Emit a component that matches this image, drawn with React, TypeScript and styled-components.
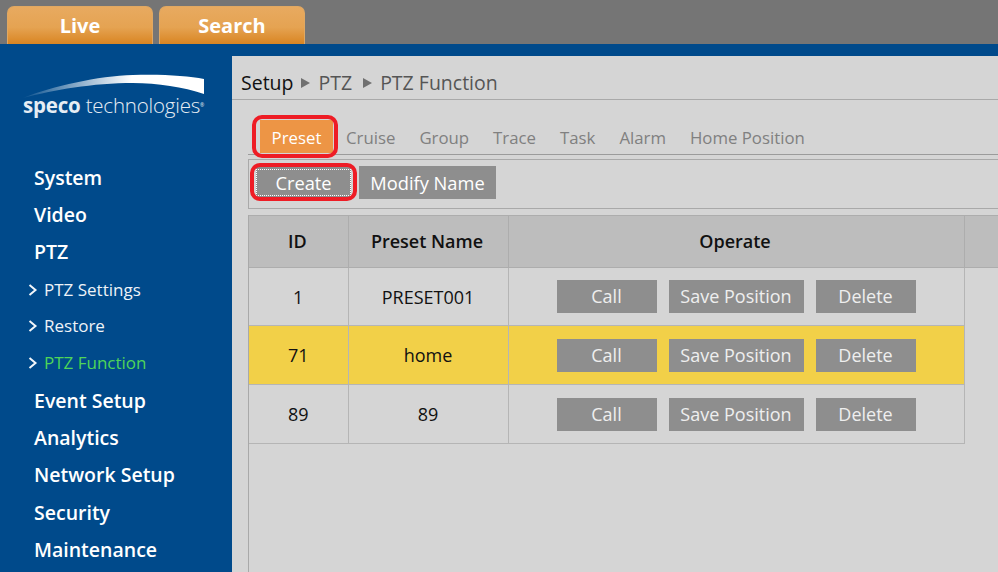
import React from 'react'
import styled, { createGlobalStyle } from 'styled-components'

const GlobalStyle = createGlobalStyle`
    html, body {
        margin: 0;
        padding: 0;
        width: 998px;
        height: 572px;
        overflow: hidden;
        background: #d5d5d5;
        font-family: 'Open Sans', 'Noto Sans', sans-serif;
    }
    * {
        box-sizing: border-box;
    }
`

const Page = styled.div`
    width: 998px;
    height: 572px;
    display: flex;
    flex-direction: column;
    overflow: hidden;
`

const TopBar = styled.div`
    height: 44px;
    flex: none;
    background: #757575;
    display: flex;
    align-items: flex-end;
    gap: 6px;
    padding-left: 7px;
`

const TopTab = styled.div`
    width: 146px;
    height: 38px;
    border-radius: 7px 7px 0 0;
    border: 1px solid #e0a862;
    border-bottom: none;
    background: linear-gradient(#e8aa60 0%, #e5a352 55%, #d98522 100%);
    color: #fff;
    font-size: 20px;
    font-weight: 700;
    line-height: 38px;
    text-align: center;
`

const Body = styled.div`
    flex: 1;
    display: flex;
    min-height: 0;
    background: #004a8b;
`

const Sidebar = styled.div`
    width: 232px;
    flex: none;
    display: flex;
    flex-direction: column;
`

const Logo = styled.div`
    height: 70px;
    margin-top: 30px;
    padding-left: 23px;
`

const LogoText = styled.div`
    margin-top: -2px;
    color: #e6edf4;
    font-size: 20.5px;
    line-height: 18px;
    letter-spacing: -0.2px;
    white-space: nowrap;
`

const LogoBold = styled.span`
    font-weight: 700;
`

const LogoLight = styled.span`
    font-weight: 300;
    letter-spacing: -0.2px;
`

const LogoMark = styled.span`
    font-size: 5px;
    vertical-align: 6px;
`

const Menu = styled.div`
    display: flex;
    flex-direction: column;
    padding-left: 34px;
    margin-top: 15px;
`

const MenuItem = styled.div`
    height: 37.2px;
    line-height: 37px;
    color: #fff;
    font-size: 19.5px;
    font-weight: 600;
    white-space: nowrap;
`

const SubGroup = styled.div`
    padding: 1px 0;
`

const SubItem = styled.div<{ $active?: boolean }>`
    height: 36.5px;
    line-height: 36px;
    margin-left: -6px;
    display: flex;
    align-items: center;
    gap: 6px;
    color: ${(p) => (p.$active ? '#4fd558' : '#eef3f8')};
    font-size: 17px;
    white-space: nowrap;
`

const Main = styled.div`
    flex: 1;
    min-width: 0;
    margin-top: 12px;
    background: #d5d5d5;
    overflow: hidden;
`

const Breadcrumb = styled.div`
    height: 44px;
    padding: 10px 0 0 9px;
    display: flex;
    align-items: center;
    gap: 8px;
    font-size: 19.5px;
    color: #111;
    border-bottom: 1px solid #a9a9a9;
`

const Crumb = styled.span<{ $dim?: boolean; $pad?: number }>`
    color: ${(p) => (p.$dim ? '#555' : '#111')};
    padding-right: ${(p) => p.$pad || 0}px;
`

const Arrow = styled.span`
    width: 0;
    height: 0;
    border-left: 9px solid #707070;
    border-top: 5px solid transparent;
    border-bottom: 5px solid transparent;
    margin-top: 1px;
`

const TabRow = styled.div`
    margin: 20px 0 0 16px;
    height: 35px;
    display: flex;
    align-items: stretch;
    border-bottom: 1px solid #9b9b9b;
    padding-bottom: 1px;
    gap: 2px;
`

const TabBtn = styled.div<{ $active?: boolean }>`
    position: relative;
    margin-left: ${(p) => (p.$active ? '12px' : '0')};
    width: ${(p) => (p.$active ? '73px' : 'auto')};
    padding: ${(p) => (p.$active ? '0' : '0 11px')};
    background: ${(p) => (p.$active ? '#ed9545' : 'transparent')};
    color: ${(p) => (p.$active ? '#fff' : '#808080')};
    font-size: 16.8px;
    line-height: 36px;
    text-align: center;
    white-space: nowrap;
`

const Highlight = styled.div<{ $inset: string }>`
    position: absolute;
    inset: ${(p) => p.$inset};
    border: 4px solid #ee1c25;
    border-radius: 10px;
    pointer-events: none;
`

const Toolbar = styled.div`
    margin: 4px 0 0 16px;
    height: 50px;
    border: 1px solid #a9a9a9;
    border-right: none;
    display: flex;
    align-items: flex-start;
    gap: 8px;
    padding: 6px 0 0 7px;
`

const ToolBtn = styled.div<{ $w: number }>`
    position: relative;
    height: 33px;
    width: ${(p) => p.$w}px;
    background: #8e8e8e;
    color: #fff;
    font-size: 18.3px;
    line-height: 33px;
    text-align: center;
    white-space: nowrap;
`

const FocusRing = styled.div`
    position: absolute;
    inset: 3px 0;
    border: 1px dotted #fff;
    pointer-events: none;
`

const TableWrap = styled.div`
    margin: 6px 0 0 16px;
    height: 400px;
    border-left: 1px solid #a9a9a9;
`

const Table = styled.table`
    border-collapse: collapse;
    table-layout: fixed;
    width: 759px;
    font-size: 18px;
    color: #111;
`

const HeadCell = styled.th`
    height: 52px;
    padding: 0 2px 1px 0;
    background: #bdbdbd;
    border: 1px solid #adadad;
    border-left: none;
    font-size: 18px;
    font-weight: 600;
    color: #111;
    text-align: center;
`

const Cell = styled.td<{ $hot?: boolean; $h: number }>`
    height: ${(p) => p.$h}px;
    padding: 0;
    border: 1px solid #b5b5b5;
    border-left: none;
    background: ${(p) => (p.$hot ? '#f2d048' : '#d5d5d5')};
    text-align: center;
`

const Actions = styled.div`
    display: flex;
    justify-content: center;
    gap: 12px;
`

const ActionBtn = styled.div<{ $w: number }>`
    width: ${(p) => p.$w}px;
    height: 33px;
    background: #8e8e8e;
    color: #eee;
    font-size: 18px;
    line-height: 33px;
    text-align: center;
    white-space: nowrap;
`

const Swoosh = styled.svg`
    display: block;
`

const Chevron = () => (
    <svg width="10" height="12" viewBox="0 0 10 12">
        <path d="M1.5 1 L7.500 6 L1.5 11" fill="none" stroke="#f2f6fa" strokeWidth="2" />
    </svg>
)

const rows = [
    { id: '1', name: 'PRESET001', h: 58 },
    { id: '71', name: 'home', hot: true, h: 59 },
    { id: '89', name: '89', h: 59 },
]

export default function App() {
    return (
        <Page>
            <GlobalStyle />
            <TopBar>
                <TopTab>Live</TopTab>
                <TopTab>Search</TopTab>
            </TopBar>
            <Body>
                <Sidebar>
                    <Logo>
                        <Swoosh width="182" height="24" viewBox="0 0 182 24">
                            <defs>
                                <linearGradient id="sw" x1="0" x2="1" y1="0" y2="0">
                                    <stop offset="0" stopColor="#fff" stopOpacity="0.05" />
                                    <stop offset="0.4" stopColor="#fff" stopOpacity="0.7" />
                                    <stop offset="0.6" stopColor="#fff" />
                                    <stop offset="1" stopColor="#fff" />
                                </linearGradient>
                            </defs>
                            <path
                                d="M0 24 C30 12 75 2 110 1 C140 0 165 2 181 5 L181 20 C160 13 135 9 110 9 C70 9 30 16 0 24 Z"
                                fill="url(#sw)"
                            />
                        </Swoosh>
                        <LogoText>
                            <LogoBold>speco</LogoBold> <LogoLight>technologies</LogoLight>
                            <LogoMark>®</LogoMark>
                        </LogoText>
                    </Logo>
                    <Menu>
                        <MenuItem>System</MenuItem>
                        <MenuItem>Video</MenuItem>
                        <MenuItem>PTZ</MenuItem>
                        <SubGroup>
                            <SubItem><Chevron />PTZ Settings</SubItem>
                            <SubItem><Chevron />Restore</SubItem>
                            <SubItem $active><Chevron />PTZ Function</SubItem>
                        </SubGroup>
                        <MenuItem>Event Setup</MenuItem>
                        <MenuItem>Analytics</MenuItem>
                        <MenuItem>Network Setup</MenuItem>
                        <MenuItem>Security</MenuItem>
                        <MenuItem>Maintenance</MenuItem>
                    </Menu>
                </Sidebar>
                <Main>
                    <Breadcrumb>
                        <Crumb>Setup</Crumb>
                        <Arrow />
                        <Crumb $dim $pad={3}>PTZ</Crumb>
                        <Arrow />
                        <Crumb $dim>PTZ Function</Crumb>
                    </Breadcrumb>
                    <TabRow>
                        <TabBtn $active>
                            Preset
                            <Highlight $inset="-5px -5px -5px -8px" />
                        </TabBtn>
                        <TabBtn>Cruise</TabBtn>
                        <TabBtn>Group</TabBtn>
                        <TabBtn>Trace</TabBtn>
                        <TabBtn>Task</TabBtn>
                        <TabBtn>Alarm</TabBtn>
                        <TabBtn>Home Position</TabBtn>
                    </TabRow>
                    <Toolbar>
                        <ToolBtn $w={95}>
                            Create
                            <FocusRing />
                            <Highlight $inset="-3px -6px -2px -6px" />
                        </ToolBtn>
                        <ToolBtn $w={137}>Modify Name</ToolBtn>
                    </Toolbar>
                    <TableWrap>
                        <Table>
                            <colgroup>
                                <col width="99" />
                                <col width="160" />
                                <col width="456" />
                                <col width="44" />
                            </colgroup>
                            <thead>
                                <tr>
                                    <HeadCell>ID</HeadCell>
                                    <HeadCell>Preset Name</HeadCell>
                                    <HeadCell>Operate</HeadCell>
                                    <HeadCell />
                                </tr>
                            </thead>
                            <tbody>
                                {rows.map((row) => (
                                    <tr key={row.id}>
                                        <Cell $h={row.h} $hot={row.hot}>{row.id}</Cell>
                                        <Cell $h={row.h} $hot={row.hot}>{row.name}</Cell>
                                        <Cell $h={row.h} $hot={row.hot}>
                                            <Actions>
                                                <ActionBtn $w={100}>Call</ActionBtn>
                                                <ActionBtn $w={135}>Save Position</ActionBtn>
                                                <ActionBtn $w={100}>Delete</ActionBtn>
                                            </Actions>
                                        </Cell>
                                    </tr>
                                ))}
                            </tbody>
                        </Table>
                    </TableWrap>
                </Main>
            </Body>
        </Page>
    )
}
